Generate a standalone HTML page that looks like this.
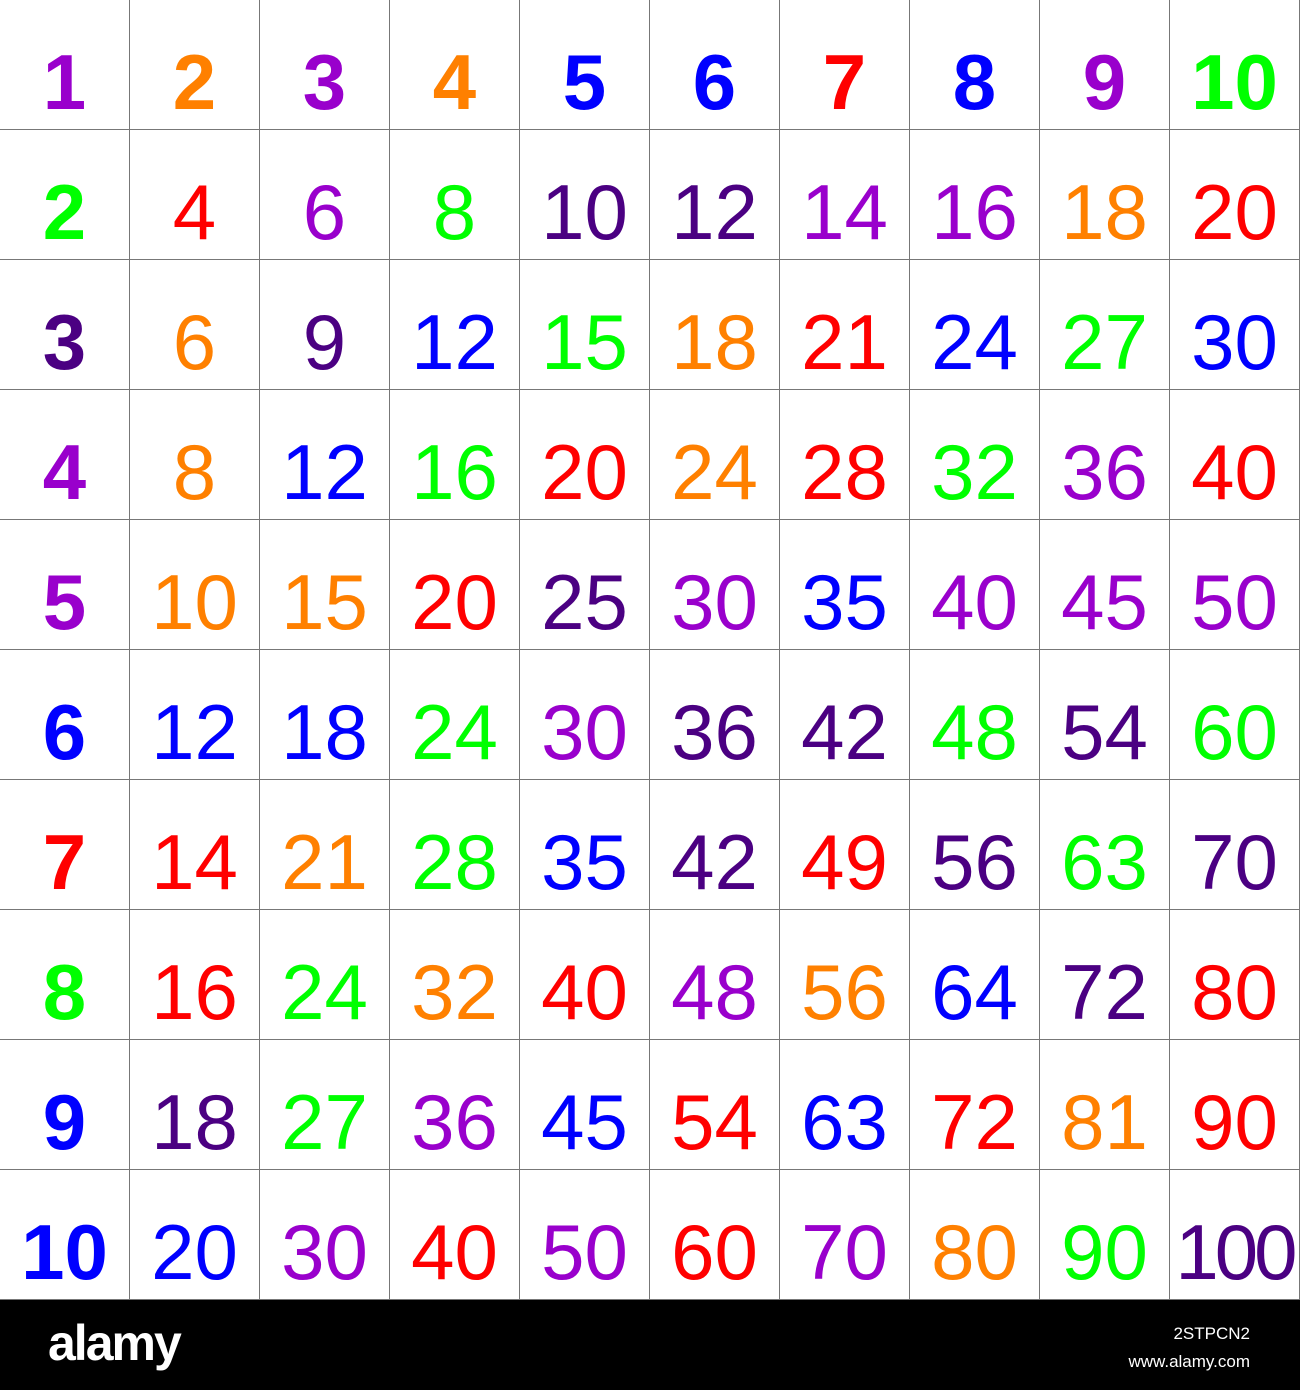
<!DOCTYPE html>
<html><head><meta charset="utf-8"><style>
body{margin:0;width:1300px;height:1390px;background:#fff;overflow:hidden;font-family:"Liberation Sans",Arial,sans-serif;position:relative}
.c{position:absolute;width:129px;height:129px;border-right:1px solid #777;border-bottom:1px solid #777;text-align:center;font-size:78px;line-height:128px;box-sizing:content-box}
.c span{position:relative;top:18px}
.b{font-weight:bold}
.P{color:#9900cc}.O{color:#ff8000}.B{color:#0000ff}.R{color:#ff0000}.G{color:#00ff00}.D{color:#4b0082}
#bar{position:absolute;left:0;top:1300px;width:1300px;height:90px;background:#000;color:#fff}
</style></head><body>
<div id="g"></div>
<div id="bar">
<div style="position:absolute;left:48px;top:14px;font-size:50px;font-weight:bold;letter-spacing:-2px">alamy</div>
<div style="position:absolute;right:50px;top:20px;font-size:17px;text-align:right;line-height:28px">2STPCN2<br>www.alamy.com</div>
</div>
<script>
var C=["POPOBBRBPG","GRPGDDPPOR","DODBGORBGB","POBGRORGPR","POORDPBPPP","BBBGPDDGDG","RROGBDRDGD","GRGORPOBDR","BDGPBRBROR","BBPRPRPOGD"];
var h="";
for(var r=0;r<10;r++)for(var c=0;c<10;c++){
var v=(r+1)*(c+1);var bold=(r==0||c==0)?" b":"";
var ls=(v==100)?"letter-spacing:-4px;":"";
h+='<div class="c '+C[r][c]+bold+'" style="left:'+(c*130)+'px;top:'+(r*130)+'px;'+ls+'"><span>'+v+'</span></div>';}
document.getElementById("g").innerHTML=h;
</script>
</body></html>
